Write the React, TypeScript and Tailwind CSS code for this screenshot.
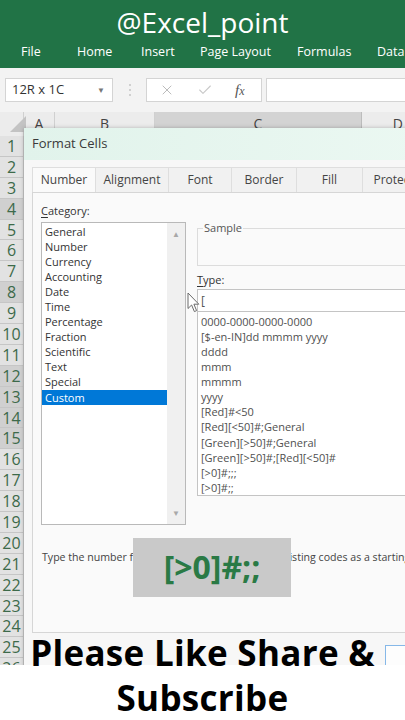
import { Check, X } from 'lucide-react';

const ROWS = Array.from({ length: 26 }, (_, i) => i + 1);
const DARK_ROWS = [4, 8, 12, 13, 14, 15];

const MENU = [
  { label: 'File', width: 'w-[56px]' },
  { label: 'Home', width: 'w-[64px]' },
  { label: 'Insert', width: 'w-[59px]' },
  { label: 'Page Layout', width: 'w-[97px]' },
  { label: 'Formulas', width: 'w-[80px]' },
  { label: 'Data', width: 'w-[40px]' },
];

const TABS = [
  { label: 'Number', width: 'w-[64px]' },
  { label: 'Alignment', width: 'w-[73px]' },
  { label: 'Font', width: 'w-[63px]' },
  { label: 'Border', width: 'w-[65px]' },
  { label: 'Fill', width: 'w-[66px]' },
  { label: 'Protection', width: 'w-[80px]' },
];

const CATEGORIES = [
  'General',
  'Number',
  'Currency',
  'Accounting',
  'Date',
  'Time',
  'Percentage',
  'Fraction',
  'Scientific',
  'Text',
  'Special',
  'Custom',
];

const TYPES = [
  '0000-0000-0000-0000',
  '[$-en-IN]dd mmmm yyyy',
  'dddd',
  'mmm',
  'mmmm',
  'yyyy',
  '[Red]#<50',
  '[Red][<50]#;General',
  '[Green][>50]#;General',
  '[Green][>50]#;[Red][<50]#',
  '[>0]#;;;',
  '[>0]#;;',
];

function Underlined({ first, rest }: { first: string; rest: string }) {
  return (
    <span>
      <span className="underline underline-offset-2">{first}</span>
      {rest}
    </span>
  );
}

function Cursor() {
  return (
    <svg
      viewBox="0 0 13 21"
      className="absolute left-[187px] top-[292px] h-[21px] w-[13px]"
      aria-hidden
    >
      <path
        d="M1 1 L1 16.5 L4.6 13 L7.4 19.6 L9.6 18.6 L6.9 12.2 L11.8 12.2 Z"
        fill="#ffffff"
        stroke="#6b6b6b"
        strokeWidth="1"
        strokeLinejoin="round"
      />
    </svg>
  );
}

export default function App() {
  return (
    <div className="relative h-[720px] w-[405px] overflow-hidden bg-white font-['Open_Sans',sans-serif]">
      {/* ribbon */}
      <header className="h-[68px] bg-[#217346] text-white">
        <div className="flex h-[42px] items-center justify-center pt-[1px] text-[28px] leading-none">
          @Excel_point
        </div>
        <nav className="flex h-[26px] whitespace-nowrap pl-[21px] text-[12.5px] leading-[20px]">
          {MENU.map((item) => (
            <span key={item.label} className={`${item.width} shrink-0`}>
              {item.label}
            </span>
          ))}
        </nav>
      </header>

      {/* formula bar */}
      <div className="flex h-[44px] items-center bg-[#f3f3f3] pl-[5px]">
        <div className="flex h-[24px] w-[108px] items-center justify-between border border-[#d4d4d4] bg-white pl-[6px] pr-[7px] text-[13px] text-[#333]">
          <span>12R x 1C</span>
          <span className="text-[8px] text-[#777]">▼</span>
        </div>
        <div className="ml-[16px] flex h-[20px] w-[3px] flex-col justify-center gap-[3px]">
          <span className="h-[2px] w-[2px] rounded-full bg-[#c4c4c4]" />
          <span className="h-[2px] w-[2px] rounded-full bg-[#c4c4c4]" />
          <span className="h-[2px] w-[2px] rounded-full bg-[#c4c4c4]" />
        </div>
        <div className="ml-[14px] flex h-[24px] w-[116px] items-center border border-[#d4d4d4] bg-white pl-[12px] text-[#b0b0b0]">
          <X size={16} strokeWidth={1.3} />
          <Check size={16} strokeWidth={1.6} className="ml-[22px] text-[#c8c8c8]" />
          <span className="ml-[22px] font-['Liberation_Serif',serif] text-[15px] italic text-[#555]">
            f<span className="text-[12px]">x</span>
          </span>
        </div>
        <div className="ml-[4px] h-[24px] flex-1 border border-r-0 border-[#d4d4d4] bg-white" />
      </div>

      {/* column headers */}
      <div className="flex h-[24px] bg-[#ececec] text-[14px] leading-[22px] text-[#444]">
        <div className="relative w-[24px] border-r border-[#d0d0d0]">
          <svg viewBox="0 0 16 16" className="absolute left-[10px] top-[4px] h-[16px] w-[16px]" aria-hidden>
            <path d="M16 0 L16 16 L0 16 Z" fill="#c3c3c3" />
          </svg>
        </div>
        <div className="w-[31px] border-r border-[#d0d0d0] pt-[1px] text-center">A</div>
        <div className="w-[100px] border-r border-[#d0d0d0] pt-[1px] text-center">B</div>
        <div className="w-[207px] border-r border-[#bcbcbc] bg-[#d3d3d3] pt-[1px] text-center">C</div>
        <div className="flex-1 pt-[1px] pr-[2px] text-right">D</div>
      </div>

      {/* rows */}
      <div className="flex flex-col">
        {ROWS.map((n) => (
          <div key={n} className="flex h-[20.9px]">
            <div
              className={`flex w-[24px] items-center justify-center border-b border-r border-[#c6c6c6] text-[16px] text-[#3d6a4a] ${
                DARK_ROWS.includes(n) ? 'bg-[#d0d0d0]' : 'bg-[#e2e2e2]'
              }`}
            >
              {n}
            </div>
            <div className="flex-1 border-b border-[#e2e2e2] bg-white" />
          </div>
        ))}
      </div>

      {/* Format Cells dialog */}
      <div className="absolute bottom-0 left-[24px] top-[128px] w-[400px] bg-[#f7f7f7] text-[11px] text-[#333] shadow-[0_0_4px_rgba(0,0,0,0.25)]">
        <div className="flex h-[32px] items-center bg-gradient-to-r from-[#e1f3eb] to-[#ebf8f2] pl-[8px] text-[13px] text-[#3a3a3a]">
          Format Cells
        </div>

        <div className="ml-[8px] mt-[7px] flex h-[25px] whitespace-nowrap text-[12px] text-[#444]">
          {TABS.map((tab, i) => (
            <div
              key={tab.label}
              className={`${tab.width} flex shrink-0 items-center justify-center border-r border-t border-[#dedede] ${
                i === 0 ? 'border-l bg-[#fafafa]' : 'bg-[#f1f1f1]'
              }`}
            >
              {tab.label}
            </div>
          ))}
        </div>

        <div className="ml-[8px] h-[441px] border border-r-0 border-[#d6d6d6] bg-[#fafafa]">
          <div className="flex pl-[8px]">
            <div className="flex w-[145px] flex-col">
              <div className="mt-[11px] h-[14px] leading-[14px]">
                <Underlined first="C" rest="ategory:" />
              </div>
              <div className="mt-[4px] flex h-[303px] border border-[#b9b9b9] bg-white">
                <div className="flex-1 pt-[1px]">
                  {CATEGORIES.map((c) => (
                    <div
                      key={c}
                      className={`h-[15.05px] pl-[3px] leading-[15px] ${
                        c === 'Custom' ? 'bg-[#0078d7] text-white' : 'text-[#333]'
                      }`}
                    >
                      {c}
                    </div>
                  ))}
                </div>
                <div className="flex w-[18px] flex-col items-center justify-between bg-[#f0f0f0] py-[7px] text-[8px] leading-none text-[#a8a8a8]">
                  <span>▲</span>
                  <span>▼</span>
                </div>
              </div>
            </div>

            <div className="ml-[11px] flex flex-1 flex-col">
              <fieldset className="mt-[28px] h-[45px] border border-r-0 border-[#dcdcdc]">
                <legend className="ml-[5px] px-[1px] leading-[14px] text-[#555]">Sample</legend>
              </fieldset>
              <div className="mt-[7px] h-[14px] leading-[14px]">
                <Underlined first="T" rest="ype:" />
              </div>
              <div className="mt-[2px] flex h-[23px] items-center border border-r-0 border-[#c4c4c4] bg-white pl-[3px] text-[12px] text-[#555]">
                [
              </div>
              <div className="h-[184px] overflow-hidden border border-r-0 border-t-0 border-[#c4c4c4] bg-white pl-[3px] pt-[2px] text-[#505050]">
                {TYPES.map((t) => (
                  <div key={t} className="h-[15.07px] whitespace-nowrap leading-[15px]">
                    {t}
                  </div>
                ))}
              </div>
            </div>
          </div>

          <p className="mt-[25px] whitespace-nowrap pl-[9px] text-[10.6px] leading-[14px] text-[#444]">
            Type the number format code, using one of the existing codes as a starting point.
          </p>
        </div>

        <div className="pl-[361px] pt-[12px]">
          <div className="h-[21px] w-[75px] border border-[#86b8e8] bg-[#fdfdfd]" />
        </div>
      </div>

      <Cursor />

      {/* highlighted code */}
      <div className="absolute left-[133px] top-[538px] flex h-[59px] w-[158px] items-center justify-center bg-[#c9c9c9] pb-[2px] text-[32px] font-bold text-[#2a7a45]">
        [&gt;0]#;;
      </div>

      {/* caption */}
      <div className="absolute bottom-0 left-0 right-0 top-[665px] bg-white" />
      <div className="absolute left-0 right-0 top-[631px] flex flex-col items-center text-[35px] font-bold leading-[44px] tracking-[0.3px] text-black">
        <span className="whitespace-nowrap">Please Like Share &amp;</span>
        <span className="pt-[1px]">Subscribe</span>
      </div>
    </div>
  );
}
